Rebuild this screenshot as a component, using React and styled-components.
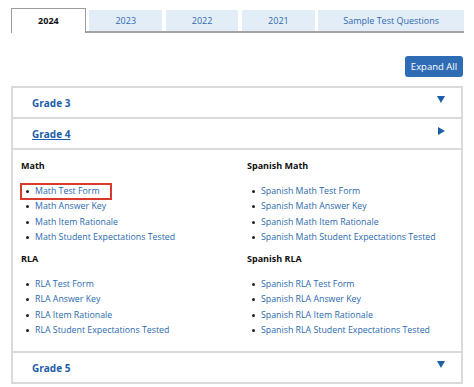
import React from "react";
import styled, { createGlobalStyle } from "styled-components";

const GlobalStyle = createGlobalStyle`
  body {
    margin: 0;
    background: #fff;
    font-family: "Open Sans", "Liberation Sans", sans-serif;
  }
`;

const tabs = ["2024", "2023", "2022", "2021", "Sample Test Questions"];

const sections = [
  {
    left: { title: "Math", items: ["Math Test Form", "Math Answer Key", "Math Item Rationale", "Math Student Expectations Tested"] },
    right: {
      title: "Spanish Math",
      items: ["Spanish Math Test Form", "Spanish Math Answer Key", "Spanish Math Item Rationale", "Spanish Math Student Expectations Tested"],
    },
  },
  {
    left: { title: "RLA", items: ["RLA Test Form", "RLA Answer Key", "RLA Item Rationale", "RLA Student Expectations Tested"] },
    right: {
      title: "Spanish RLA",
      items: ["Spanish RLA Test Form", "Spanish RLA Answer Key", "Spanish RLA Item Rationale", "Spanish RLA Student Expectations Tested"],
    },
  },
];

export default function App() {
  return (
    <>
      <GlobalStyle />
      <Page>
        <TabBar>
          {tabs.map((t, i) => (
            <Tab key={t} $active={i === 0} $wide={i === 4}>
              {t}
            </Tab>
          ))}
        </TabBar>
        <Toolbar>
          <ExpandButton>Expand All</ExpandButton>
        </Toolbar>
        <Accordion>
          <GradeRow>
            <GradeTitle>Grade 3</GradeTitle>
            <Arrow $dir="down" />
          </GradeRow>
          <GradeRow>
            <GradeTitle $open>Grade 4</GradeTitle>
            <Arrow $dir="right" />
          </GradeRow>
          <Panel>
            {sections.map((s, si) =>
              [s.left, s.right].map((col, ci) => (
                <Column key={si + "-" + ci}>
                  <Heading>{col.title}</Heading>
                  <LinkList>
                    {col.items.map((item, ii) => (
                      <Item key={item} $highlight={si === 0 && ci === 0 && ii === 0}>
                        <a href="#">{item}</a>
                      </Item>
                    ))}
                  </LinkList>
                </Column>
              ))
            )}
          </Panel>
          <GradeRow>
            <GradeTitle>Grade 5</GradeTitle>
            <Arrow $dir="down" />
          </GradeRow>
        </Accordion>
      </Page>
    </>
  );
}

const Page = styled.div`
  padding: 7px 10px 0 11px;
`;

const TabBar = styled.div`
  display: flex;
  align-items: flex-end;
  gap: 3.5px;
  height: 24px;
  border-bottom: 2px solid #a3a3a3;
`;

const Tab = styled.div`
  flex: ${(p) => (p.$wide ? 2 : 1)};
  display: flex;
  align-items: center;
  justify-content: center;
  box-sizing: border-box;
  font-size: 9px;
  height: ${(p) => (p.$active ? "25px" : "21px")};
  margin-bottom: ${(p) => (p.$active ? "-2px" : "0")};
  padding-bottom: ${(p) => (p.$active ? "2px" : "0")};
  background: ${(p) => (p.$active ? "#fff" : "#e3edf8")};
  color: ${(p) => (p.$active ? "#111" : "#2e6aae")};
  font-weight: ${(p) => (p.$active ? 700 : 400)};
  border: ${(p) => (p.$active ? "1px solid #9c9c9c" : "none")};
  border-bottom: none;
`;

const Toolbar = styled.div`
  display: flex;
  justify-content: flex-end;
  padding: 23px 1px 0 0;
  margin-bottom: 9px;
`;

const ExpandButton = styled.button`
  font-family: inherit;
  font-size: 9.5px;
  color: #fff;
  background: #2e6db5;
  border: none;
  border-radius: 3px;
  width: 58px;
  height: 21px;
  padding: 0;
`;

const Accordion = styled.div`
  margin-right: 1px;
  border: 2px solid #dadada;
  border-bottom: none;
`;

const GradeRow = styled.div`
  display: flex;
  justify-content: space-between;
  align-items: center;
  height: 29px;
  padding: 0 16px 0 19px;
  border-bottom: 2px solid #dadada;
`;

const GradeTitle = styled.span`
  font-size: 10px;
  font-weight: 700;
  color: #1d5ea8;
  text-decoration: ${(p) => (p.$open ? "underline" : "none")};
`;

const Arrow = styled.span`
  width: 0;
  height: 0;
  margin-top: -6px;
  ${(p) =>
    p.$dir === "down"
      ? `border-left: 4px solid transparent;
         border-right: 4px solid transparent;
         border-top: 7px solid #1d5ea8;`
      : `border-top: 4px solid transparent;
         border-bottom: 4px solid transparent;
         border-left: 7px solid #1d5ea8;`}
`;

const Panel = styled.div`
  display: grid;
  grid-template-columns: 226px 1fr;
  row-gap: 7px;
  padding: 9px 8px 13px 8px;
  border-bottom: 2px solid #dadada;
`;

const Column = styled.div`
  display: flex;
  flex-direction: column;
`;

const Heading = styled.div`
  font-size: 9px;
  font-weight: 700;
  color: #111;
  line-height: 13px;
  margin-bottom: 12px;
`;

const LinkList = styled.ul`
  list-style: none;
  margin: 0;
  padding: 0;
`;

const Item = styled.li`
  position: relative;
  width: fit-content;
  font-size: 8.8px;
  line-height: 15.3px;
  padding: 0 ${(p) => (p.$highlight ? "11px" : "0")} 0 14px;
  outline: ${(p) => (p.$highlight ? "2px solid #d8392b" : "none")};
  outline-offset: -1px;

  &::before {
    content: "";
    position: absolute;
    left: 5px;
    top: 6px;
    width: 3px;
    height: 3px;
    border-radius: 50%;
    background: #222;
  }

  a {
    color: #2a6aae;
    text-decoration: none;
  }
`;
